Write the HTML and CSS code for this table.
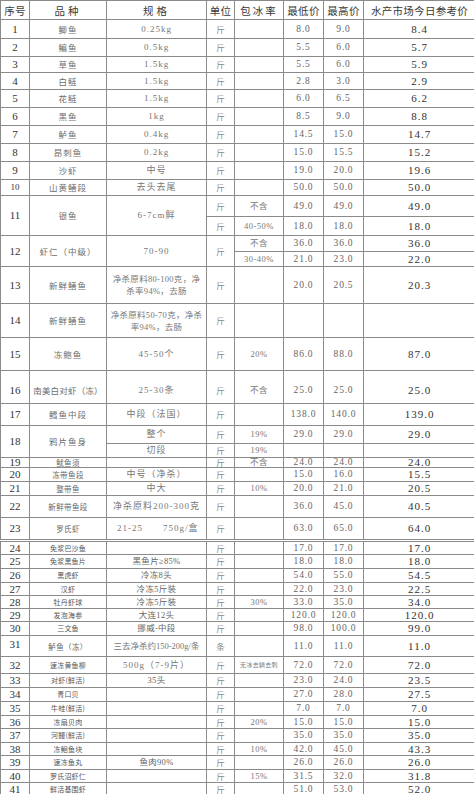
FILE: index.html
```html
<!DOCTYPE html>
<html lang="zh">
<head>
<meta charset="utf-8">
<title>水产市场今日参考价</title>
<link rel="stylesheet" href="styles.css">
</head>
<body>
<table class="grid">
<colgroup>
<col class="c1"><col class="c2"><col class="c3"><col class="c4"><col class="c5"><col class="c6"><col class="c7"><col class="c8">
</colgroup>
<tbody>
<tr class="h19 head"><td>序号</td><td class="wide">品种</td><td class="wide">规格</td><td>单位</td><td class="ice-h">包冰率</td><td>最低价</td><td>最高价</td><td>水产市场今日参考价</td></tr>
<tr class="h19"><td class="n">1</td><td class="nm">鲫鱼</td><td class="sp">0.25kg</td><td class="u">斤</td><td class="ic"></td><td class="p">8.0</td><td class="p">9.0</td><td class="r">8.4</td></tr>
<tr class="h18"><td class="n">2</td><td class="nm">鳊鱼</td><td class="sp">0.5kg</td><td class="u">斤</td><td class="ic"></td><td class="p">5.5</td><td class="p">6.0</td><td class="r">5.7</td></tr>
<tr class="h16"><td class="n">3</td><td class="nm">草鱼</td><td class="sp">1.5kg</td><td class="u">斤</td><td class="ic"></td><td class="p">5.5</td><td class="p">6.0</td><td class="r">5.9</td></tr>
<tr class="h17"><td class="n">4</td><td class="nm">白鲢</td><td class="sp">1.5kg</td><td class="u">斤</td><td class="ic"></td><td class="p">2.8</td><td class="p">3.0</td><td class="r">2.9</td></tr>
<tr class="h18"><td class="n">5</td><td class="nm">花鲢</td><td class="sp">1.5kg</td><td class="u">斤</td><td class="ic"></td><td class="p">6.0</td><td class="p">6.5</td><td class="r">6.2</td></tr>
<tr class="h18"><td class="n">6</td><td class="nm">黑鱼</td><td class="sp">1kg</td><td class="u">斤</td><td class="ic"></td><td class="p">8.5</td><td class="p">9.0</td><td class="r">8.8</td></tr>
<tr class="h18"><td class="n">7</td><td class="nm">鲈鱼</td><td class="sp">0.4kg</td><td class="u">斤</td><td class="ic"></td><td class="p">14.5</td><td class="p">15.0</td><td class="r">14.7</td></tr>
<tr class="h18"><td class="n">8</td><td class="nm">昂刺鱼</td><td class="sp">0.2kg</td><td class="u">斤</td><td class="ic"></td><td class="p">15.0</td><td class="p">15.5</td><td class="r">15.2</td></tr>
<tr class="h18"><td class="n">9</td><td class="nm">沙虾</td><td class="sp">中号</td><td class="u">斤</td><td class="ic"></td><td class="p">19.0</td><td class="p">20.0</td><td class="r">19.6</td></tr>
<tr class="h16"><td class="n small">10</td><td class="nm">山黄鳝段</td><td class="sp">去头去尾</td><td class="u">斤</td><td class="ic"></td><td class="p">50.0</td><td class="p">50.0</td><td class="r">50.0</td></tr>
<tr class="h21"><td class="n" rowspan="2">11</td><td class="nm" rowspan="2">银鱼</td><td class="sp" rowspan="2">6-7cm鲜</td><td class="u">斤</td><td class="ic">不含</td><td class="p">49.0</td><td class="p">49.0</td><td class="r">49.0</td></tr>
<tr class="h19"><td class="u">斤</td><td class="ic">40-50%</td><td class="p">18.0</td><td class="p">18.0</td><td class="r">18.0</td></tr>
<tr class="h16"><td class="n" rowspan="2">12</td><td class="nm" rowspan="2">虾仁（中级）</td><td class="sp" rowspan="2">70-90</td><td class="u" rowspan="2">斤</td><td class="ic">不含</td><td class="p">36.0</td><td class="p">36.0</td><td class="r">36.0</td></tr>
<tr class="h15"><td class="ic">30-40%</td><td class="p">21.0</td><td class="p">23.0</td><td class="r">22.0</td></tr>
<tr class="h37"><td class="n">13</td><td class="nm">新鲜鳝鱼</td><td class="sp two">净杀原料80-100克，净<br>杀率94%，去肠</td><td class="u">斤</td><td class="ic"></td><td class="p">20.0</td><td class="p">20.5</td><td class="r">20.3</td></tr>
<tr class="h34"><td class="n">14</td><td class="nm">新鲜鳝鱼</td><td class="sp two">净杀原料50-70克，净杀<br>率94%，去肠</td><td class="u">斤</td><td class="ic"></td><td class="p"></td><td class="p"></td><td class="r"></td></tr>
<tr class="h33"><td class="n">15</td><td class="nm">冻鲍鱼</td><td class="sp">45-50个</td><td class="u">斤</td><td class="ic">20%</td><td class="p">86.0</td><td class="p">88.0</td><td class="r">87.0</td></tr>
<tr class="h33"><td class="n low">16</td><td class="nm tight low">南美白对虾（冻）</td><td class="sp low">25-30条</td><td class="u low">斤</td><td class="ic low">不含</td><td class="p low">25.0</td><td class="p low">25.0</td><td class="r low">25.0</td></tr>
<tr class="h22"><td class="n">17</td><td class="nm">鳕鱼中段</td><td class="sp">中段（法国）</td><td class="u">斤</td><td class="ic"></td><td class="p">138.0</td><td class="p">140.0</td><td class="r">139.0</td></tr>
<tr class="h18"><td class="n" rowspan="2">18</td><td class="nm" rowspan="2">鸦片鱼身</td><td class="sp">整个</td><td class="u">斤</td><td class="ic">19%</td><td class="p">29.0</td><td class="p">29.0</td><td class="r">29.0</td></tr>
<tr class="h14"><td class="sp">切段</td><td class="u">斤</td><td class="ic">19%</td><td class="p"></td><td class="p"></td><td class="r"></td></tr>
<tr class="h10"><td class="n">19</td><td class="nm mid">鱿鱼须</td><td class="sp"></td><td class="u">斤</td><td class="ic">不含</td><td class="p">24.0</td><td class="p">24.0</td><td class="r">24.0</td></tr>
<tr class="h14"><td class="n">20</td><td class="nm mid">冻带鱼段</td><td class="sp">中号（净杀）</td><td class="u">斤</td><td class="ic"></td><td class="p">15.0</td><td class="p">16.0</td><td class="r">15.5</td></tr>
<tr class="h14"><td class="n">21</td><td class="nm mid">整带鱼</td><td class="sp">中大</td><td class="u">斤</td><td class="ic">10%</td><td class="p">20.0</td><td class="p">21.0</td><td class="r">20.5</td></tr>
<tr class="h22"><td class="n">22</td><td class="nm mid">新鲜带鱼段</td><td class="sp">净杀原料200-300克</td><td class="u">斤</td><td class="ic"></td><td class="p">36.0</td><td class="p">45.0</td><td class="r">40.5</td></tr>
<tr class="h23 dbl"><td class="n">23</td><td class="nm mid">罗氏虾</td><td class="sp split"><span>21-25</span><span>750g/盒</span></td><td class="u">斤</td><td class="ic"></td><td class="p">63.0</td><td class="p">65.0</td><td class="r">64.0</td></tr>
<tr class="h14"><td class="n">24</td><td class="nm lo">免浆巴沙鱼</td><td class="sp"></td><td class="u">斤</td><td class="ic"></td><td class="p">17.0</td><td class="p">17.0</td><td class="r">17.0</td></tr>
<tr class="h14"><td class="n">25</td><td class="nm lo">免浆黑鱼片</td><td class="sp lo">黑鱼片≥85%</td><td class="u">斤</td><td class="ic"></td><td class="p">18.0</td><td class="p">18.0</td><td class="r">18.0</td></tr>
<tr class="h14"><td class="n">26</td><td class="nm lo">黑虎虾</td><td class="sp lo">冷冻8头</td><td class="u">斤</td><td class="ic"></td><td class="p">54.0</td><td class="p">55.0</td><td class="r">54.5</td></tr>
<tr class="h13"><td class="n">27</td><td class="nm lo">汉虾</td><td class="sp lo">冷冻5斤装</td><td class="u">斤</td><td class="ic"></td><td class="p">22.0</td><td class="p">23.0</td><td class="r">22.5</td></tr>
<tr class="h13"><td class="n">28</td><td class="nm lo">牡丹虾球</td><td class="sp lo">冷冻5斤装</td><td class="u">斤</td><td class="ic">30%</td><td class="p">33.0</td><td class="p">35.0</td><td class="r">34.0</td></tr>
<tr class="h13"><td class="n">29</td><td class="nm lo">发泡海参</td><td class="sp lo">大连12头</td><td class="u">斤</td><td class="ic"></td><td class="p">120.0</td><td class="p">120.0</td><td class="r">120.0</td></tr>
<tr class="h14"><td class="n">30</td><td class="nm lo">三文鱼</td><td class="sp lo">挪威-中段</td><td class="u">斤</td><td class="ic"></td><td class="p">98.0</td><td class="p">100.0</td><td class="r">99.0</td></tr>
<tr class="h21"><td class="n top">31</td><td class="nm mid">鲈鱼（冻）</td><td class="sp tight">三去净杀约150-200g/条</td><td class="u">条</td><td class="ic"></td><td class="p">11.0</td><td class="p">11.0</td><td class="r">11.0</td></tr>
<tr class="h17"><td class="n">32</td><td class="nm lo">速冻黄鱼柳</td><td class="sp">500g（7-9片）</td><td class="u">斤</td><td class="ic mini">无冰去鳞去刺</td><td class="p">72.0</td><td class="p">72.0</td><td class="r">72.0</td></tr>
<tr class="h14"><td class="n">33</td><td class="nm lo">对虾(鲜活)</td><td class="sp lo">35头</td><td class="u">斤</td><td class="ic"></td><td class="p">23.0</td><td class="p">24.0</td><td class="r">23.5</td></tr>
<tr class="h14"><td class="n">34</td><td class="nm lo">青口贝</td><td class="sp"></td><td class="u">斤</td><td class="ic"></td><td class="p">27.0</td><td class="p">28.0</td><td class="r">27.5</td></tr>
<tr class="h14"><td class="n">35</td><td class="nm lo">牛蛙(鲜活)</td><td class="sp"></td><td class="u">斤</td><td class="ic"></td><td class="p">7.0</td><td class="p">7.0</td><td class="r">7.0</td></tr>
<tr class="h13"><td class="n">36</td><td class="nm lo">冻扇贝肉</td><td class="sp"></td><td class="u">斤</td><td class="ic">20%</td><td class="p">15.0</td><td class="p">15.0</td><td class="r">15.0</td></tr>
<tr class="h14"><td class="n">37</td><td class="nm lo">河鳗(鲜活)</td><td class="sp"></td><td class="u">斤</td><td class="ic"></td><td class="p">35.0</td><td class="p">35.0</td><td class="r">35.0</td></tr>
<tr class="h13"><td class="n">38</td><td class="nm lo">冻鮰鱼块</td><td class="sp"></td><td class="u">斤</td><td class="ic">10%</td><td class="p">42.0</td><td class="p">45.0</td><td class="r">43.3</td></tr>
<tr class="h14"><td class="n">39</td><td class="nm lo">速冻鱼丸</td><td class="sp lo">鱼肉90%</td><td class="u">斤</td><td class="ic"></td><td class="p">26.0</td><td class="p">26.0</td><td class="r">26.0</td></tr>
<tr class="h13"><td class="n">40</td><td class="nm lo">罗氏沼虾仁</td><td class="sp"></td><td class="u">斤</td><td class="ic">15%</td><td class="p">31.5</td><td class="p">32.0</td><td class="r">31.8</td></tr>
<tr class="h14"><td class="n">41</td><td class="nm lo">鲜活基围虾</td><td class="sp"></td><td class="u">斤</td><td class="ic"></td><td class="p">51.0</td><td class="p">53.0</td><td class="r">52.0</td></tr>
</tbody>
</table>
</body>
</html>
```

FILE: styles.css
```css
html, body {
  margin: 0;
  padding: 0;
  background: #ffffff;
}

body {
  font-family: "Liberation Serif", "Noto Sans CJK SC", serif;
  color: #555;
  overflow: hidden;
}

.grid {
  border-collapse: collapse;
  table-layout: fixed;
  width: 475px;
}

.c1 { width: 29px; }
.c2 { width: 77px; }
.c3 { width: 100px; }
.c4 { width: 28px; }
.c5 { width: 49px; }
.c6 { width: 40px; }
.c7 { width: 40px; }
.c8 { width: 112px; }

.grid td {
  border: 1px solid #8a8a8a;
  padding: 0;
  text-align: center;
  vertical-align: middle;
  line-height: 7px;
  white-space: nowrap;
}

.head td {
  font-family: "Noto Sans CJK SC", sans-serif;
  font-size: 10.5px;
  color: #3a3a3a;
  letter-spacing: 0.3px;
}

.head td.wide { letter-spacing: 3px; }
.head td.ice-h { letter-spacing: 2px; }

.grid td.n {
  font-family: "Liberation Serif", serif;
  font-size: 11px;
  color: #333;
}

.grid td.n.small { font-size: 9px; }
.grid td.n.top { vertical-align: top; padding-top: 5px; }
.grid td.low { padding-top: 6px; }

.grid td.nm {
  font-family: "Noto Sans CJK SC", sans-serif;
  font-size: 8.5px;
  color: #6e6e6e;
  letter-spacing: 1px;
}

.grid td.nm.tight { letter-spacing: 0.2px; }

.grid td.nm.mid {
  font-size: 7.5px;
  letter-spacing: 0.4px;
  color: #666;
}

.grid td.nm.lo {
  font-size: 7px;
  letter-spacing: 0.2px;
  color: #555;
}

.grid td.sp {
  font-family: "Liberation Serif", "Noto Sans CJK SC", serif;
  font-size: 9px;
  color: #777;
  letter-spacing: 1px;
}

.grid td.sp.lo {
  font-size: 8.5px;
  letter-spacing: 0.3px;
  color: #666;
}

.grid td.sp.two {
  white-space: normal;
  line-height: 12px;
  font-size: 8.5px;
  letter-spacing: 0.3px;
}

.grid td.sp.tight {
  letter-spacing: 0;
  font-size: 8.5px;
}

.grid td.sp.split span {
  display: inline-block;
  margin: 0 10px;
}

.grid td.u {
  font-family: "Noto Sans CJK SC", sans-serif;
  font-size: 8.5px;
  color: #888;
}

.grid td.ic {
  font-family: "Liberation Serif", "Noto Sans CJK SC", serif;
  font-size: 8.5px;
  color: #777;
  letter-spacing: 0.5px;
}

.grid td.ic.mini {
  font-size: 6px;
  letter-spacing: 0.3px;
}

.grid td.p {
  font-family: "Liberation Serif", serif;
  font-size: 9.5px;
  color: #666;
  letter-spacing: 0.8px;
}

.grid td.r {
  font-family: "Liberation Serif", serif;
  font-size: 11px;
  color: #333;
  letter-spacing: 1px;
}

.dbl td { border-bottom: 3px double #8a8a8a; }

.h10 { height: 10px; }
.h13 { height: 13px; }
.h14 { height: 14px; }
.h15 { height: 15px; }
.h16 { height: 16px; }
.h17 { height: 17px; }
.h18 { height: 18px; }
.h19 { height: 19px; }
.h21 { height: 21px; }
.h22 { height: 22px; }
.h23 { height: 23px; }
.h33 { height: 33px; }
.h34 { height: 34px; }
.h37 { height: 37px; }
```
